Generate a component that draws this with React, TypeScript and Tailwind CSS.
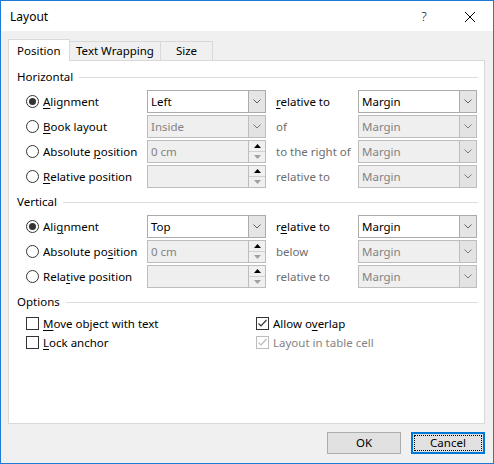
import React, { ReactNode } from 'react';

const Chevron = ({ color = '#606060' }: { color?: string }) => (
  <svg width="8" height="5" viewBox="0 0 8 5">
    <path d="M0.5 0.5 L4 4 L7.5 0.5" fill="none" stroke={color} strokeWidth="1" />
  </svg>
);

const Radio = ({ checked }: { checked?: boolean }) => (
  <div className="w-[13px] h-[13px] rounded-full border border-[#333333] bg-white flex items-center justify-center shrink-0">
    {checked && <div className="w-[7px] h-[7px] rounded-full bg-[#333333]" />}
  </div>
);

const Checkbox = ({ checked, disabled }: { checked?: boolean; disabled?: boolean }) => (
  <div
    className={`w-[13px] h-[13px] border bg-white flex items-center justify-center shrink-0 ${
      disabled ? 'border-[#bcbcbc]' : 'border-[#333333]'
    }`}
  >
    {checked && (
      <svg width="11" height="11" viewBox="0 0 11 11">
        <path
          d="M1.5 5.5 L4 8 L9.5 2"
          fill="none"
          stroke={disabled ? '#bcbcbc' : '#333333'}
          strokeWidth="1.2"
        />
      </svg>
    )}
  </div>
);

const Combo = ({ value, disabled }: { value: string; disabled?: boolean }) => (
  <div
    className={`w-[119px] h-[23px] flex border shrink-0 ${
      disabled ? 'border-[#bdbdbd] bg-[#efefef] text-[#838383]' : 'border-[#ababab] bg-white text-black'
    }`}
  >
    <div className="flex-1 pl-[3px] flex items-center">{value}</div>
    <div
      className={`w-[17px] border-l flex items-center justify-center ${
        disabled ? 'border-[#bdbdbd] bg-[#e3e3e3]' : 'border-[#ababab] bg-[#e5e5e5]'
      }`}
    >
      <Chevron color={disabled ? '#7a7a7a' : '#606060'} />
    </div>
  </div>
);

const Spin = ({ value }: { value: string }) => (
  <div className="w-[119px] h-[23px] flex border border-[#bdbdbd] bg-[#efefef] text-[#838383] shrink-0">
    <div className="flex-1 pl-[3px] flex items-center">{value}</div>
    <div className="w-[17px] border-l border-[#bdbdbd] flex flex-col bg-[#f0f0f0]">
      <div className="flex-1 flex items-center justify-center border-b border-[#d0d0d0]">
        <svg width="7" height="4" viewBox="0 0 7 4">
          <path d="M0 4 L3.5 0 L7 4 Z" fill="#000" />
        </svg>
      </div>
      <div className="flex-1 flex items-center justify-center">
        <svg width="7" height="4" viewBox="0 0 7 4">
          <path d="M0 0 L3.5 4 L7 0 Z" fill="#a0a0a0" />
        </svg>
      </div>
    </div>
  </div>
);

const SectionHeader = ({ title }: { title: string }) => (
  <div className="h-[16px] flex items-center gap-[6px]">
    <span>{title}</span>
    <div className="flex-1 h-px bg-[#dcdcdc]" />
  </div>
);

interface RowProps {
  checked?: boolean;
  label: ReactNode;
  control: ReactNode;
  rel: ReactNode;
  relDisabled?: boolean;
}

const Row = ({ checked, label, control, rel, relDisabled }: RowProps) => (
  <div className="h-[23px] flex items-center pl-[9px]">
    <div className="w-[121px] flex items-center gap-[4px] shrink-0">
      <Radio checked={checked} />
      <span className="whitespace-nowrap">{label}</span>
    </div>
    {control}
    <span className={`ml-[10px] w-[82px] shrink-0 whitespace-nowrap ${relDisabled ? 'text-[#6d6d6d]' : 'text-black'}`}>
      {rel}
    </span>
    <Combo value="Margin" disabled={relDisabled} />
  </div>
);

const K = ({ children }: { children: ReactNode }) => (
  <span className="underline underline-offset-[2px] decoration-1">{children}</span>
);

export default function App() {
  return (
    <div className="w-[494px] h-[464px] border border-[#1c7cd5] bg-[#f0f0f0] flex flex-col text-[11.5px] text-black font-['Noto_Sans',sans-serif] overflow-hidden">
      {/* title bar */}
      <div className="h-[30px] bg-white flex items-center shrink-0 pt-[2px]">
        <span className="pl-[9px] text-[12px]">Layout</span>
        <div className="ml-auto w-[46px] h-full flex items-center justify-center text-[13px] font-light">?</div>
        <div className="w-[46px] h-full flex items-center justify-center">
          <svg width="10" height="10" viewBox="0 0 10 10">
            <path d="M0 0 L10 10 M10 0 L0 10" stroke="#000" strokeWidth="1" />
          </svg>
        </div>
      </div>

      <div className="pt-2 pl-[7px] pr-[8px] flex flex-col">
        {/* tabs */}
        <div className="h-[21px] flex items-end">
          <div className="relative z-10 -mb-px h-[22px] w-[62px] bg-white border border-b-0 border-[#d9d9d9] flex items-center pl-[8px]">
            Position
          </div>
          <div className="h-[19px] w-[91px] border border-l-0 border-b-0 border-[#d9d9d9] flex items-center justify-center">
            Text Wrapping
          </div>
          <div className="h-[19px] w-[52px] border border-l-0 border-b-0 border-[#d9d9d9] flex items-center justify-center">
            Size
          </div>
        </div>

        {/* panel */}
        <div className="h-[364px] border border-[#d9d9d9] bg-white pt-2 pl-2 pr-[6px] flex flex-col">
          <SectionHeader title="Horizontal" />
          <div className="mt-[5px] flex flex-col gap-[2px]">
            <Row
              checked
              label={<><K>A</K>lignment</>}
              control={<Combo value="Left" />}
              rel={<><K>r</K>elative to</>}
            />
            <Row
              label={<><K>B</K>ook layout</>}
              control={<Combo value="Inside" disabled />}
              rel="of"
              relDisabled
            />
            <Row
              label={<>Absolute <K>p</K>osition</>}
              control={<Spin value="0 cm" />}
              rel="to the right of"
              relDisabled
            />
            <Row
              label={<><K>R</K>elative position</>}
              control={<Spin value="" />}
              rel="relative to"
              relDisabled
            />
          </div>

          <div className="mt-[6px]">
            <SectionHeader title="Vertical" />
          </div>
          <div className="mt-[5px] flex flex-col gap-[2px]">
            <Row
              checked
              label={<>Ali<K>g</K>nment</>}
              control={<Combo value="Top" />}
              rel={<>r<K>e</K>lative to</>}
            />
            <Row
              label={<>Absolute po<K>s</K>ition</>}
              control={<Spin value="0 cm" />}
              rel="below"
              relDisabled
            />
            <Row
              label={<>Rela<K>t</K>ive position</>}
              control={<Spin value="" />}
              rel="relative to"
              relDisabled
            />
          </div>

          <div className="mt-[6px]">
            <SectionHeader title="Options" />
          </div>
          <div className="mt-[4px] pl-[9px] grid grid-cols-[230px_1fr]">
            <div className="h-[19px] flex items-center gap-[4px]">
              <Checkbox />
              <span><K>M</K>ove object with text</span>
            </div>
            <div className="h-[19px] flex items-center gap-[4px]">
              <Checkbox checked />
              <span>Allow o<K>v</K>erlap</span>
            </div>
            <div className="h-[19px] flex items-center gap-[4px]">
              <Checkbox />
              <span><K>L</K>ock anchor</span>
            </div>
            <div className="h-[19px] flex items-center gap-[4px] text-[#838383]">
              <Checkbox checked disabled />
              <span>Layout in table cell</span>
            </div>
          </div>
        </div>
      </div>

      {/* buttons */}
      <div className="pt-2 pr-[8px] flex justify-end gap-[10px]">
        <div className="w-[74px] h-[22px] border border-[#adadad] bg-[#e1e1e1] flex items-center justify-center">
          OK
        </div>
        <div className="relative w-[74px] h-[22px] border-2 border-[#0078d7] bg-[#e1e1e1] flex items-center justify-center">
          <div className="absolute inset-[1px] border border-dotted border-black" />
          Cancel
        </div>
      </div>
    </div>
  );
}
